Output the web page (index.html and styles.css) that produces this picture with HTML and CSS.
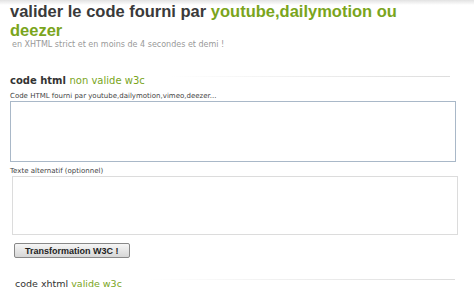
FILE: index.html
```html
<!DOCTYPE html>
<html lang="fr">
  <head>
    <meta charset="UTF-8" />
    <title>Valider le code</title>
    <link rel="stylesheet" href="styles.css">
  </head>
  <body>
    <div class="page">
      <h1>
        <span class="line">valider le code fourni par <span class="green">youtube,dailymotion ou</span></span>
        <span class="line green">deezer</span>
      </h1>
      <p class="subtitle">en XHTML strict et en moins de 4 secondes et demi !</p>

      <h2 class="section"><span>code html <span class="green">non valide w3c</span></span></h2>
      <form id="w3cForm">
        <label for="code">Code HTML fourni par youtube,dailymotion,vimeo,deezer...</label>
        <textarea id="code" class="code-box" autofocus></textarea>

        <label for="alt" class="alt-label">Texte alternatif (optionnel)</label>
        <textarea id="alt" class="alt-box"></textarea>

        <button type="submit">Transformation W3C !</button>
      </form>

      <h2 class="section result"><span>code xhtml <span class="green">valide w3c</span></span></h2>
    </div>
  </body>
</html>
```

FILE: styles.css
```css
body {
  margin: 0;
  font-family: "DejaVu Sans", Verdana, sans-serif;
  background: #fff;
  color: #333;
}
.page {
  padding: 0 10px;
  background: linear-gradient(#e2e2e2, #fff 5px);
}
.green {
  color: #7aa51c;
}
h1 {
  margin: 0;
  padding: 2px 0 0 0;
  font-family: "Liberation Sans", Arial, sans-serif;
  font-size: 16.5px;
  line-height: 18.5px;
  font-weight: bold;
  color: #3a3a3a;
}
h1 .line {
  display: block;
  height: 18.5px;
}
.subtitle {
  margin: 1px 0 0 2px;
  font-size: 8px;
  line-height: 10px;
  color: #999;
}
.section {
  display: flex;
  align-items: flex-start;
  gap: 10px;
  margin: 25px 0 0 0;
  font-size: 10px;
  line-height: 12px;
  font-weight: bold;
  color: #333;
  width: 440px;
}
.section::after {
  content: "";
  flex: 1;
  height: 1px;
  margin-top: 1px;
  background: linear-gradient(to right, #fff 5%, #ddd);
}
.section .green {
  font-weight: normal;
}
label {
  display: block;
  font-size: 7px;
  line-height: 9px;
  color: #444;
  margin-top: 5px;
}
textarea {
  display: block;
  width: 446px;
  box-sizing: border-box;
  margin: 0;
  resize: none;
  background: #fff;
  outline: none;
  caret-color: #333;
}
.code-box {
  height: 61px;
  border: 1px solid #a9b8c8;
}
.alt-label {
  margin-top: 5px;
}
.alt-box {
  height: 59px;
  margin-left: 2px;
  border: 1px solid #dcdcdc;
}
button {
  display: block;
  margin: 8px 0 0 4px;
  font-family: "Liberation Sans", Arial, sans-serif;
  font-size: 9px;
  font-weight: bold;
  color: #222;
  padding: 0 10px;
  height: 15px;
  border: 1px solid #888;
  border-radius: 2px;
  background: linear-gradient(#f6f6f6, #d6d6d6);
}
.result {
  margin: 20px 0 0 5px;
  font-size: 9.5px;
  font-weight: normal;
  width: 440px;
}
```
